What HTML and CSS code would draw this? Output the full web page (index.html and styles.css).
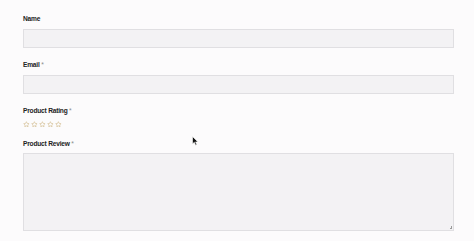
FILE: index.html
```html
<!DOCTYPE html>
<html>
<head>
<meta charset="utf-8">
<link rel="stylesheet" href="styles.css">
</head>
<body>
<form class="form">
  <div class="field">
    <label class="label">Name</label>
    <div class="input"></div>
  </div>
  <div class="field">
    <label class="label">Email <span class="req">*</span></label>
    <div class="input"></div>
  </div>
  <div class="field">
    <label class="label">Product Rating <span class="req">*</span></label>
    <div class="stars">
      <svg class="star" viewBox="0 0 24 24"><path d="M12 2.5l2.9 6.1 6.6.8-4.9 4.6 1.3 6.6L12 17.3l-5.9 3.3 1.3-6.6-4.9-4.6 6.6-.8z"/></svg>
      <svg class="star" viewBox="0 0 24 24"><path d="M12 2.5l2.9 6.1 6.6.8-4.9 4.6 1.3 6.6L12 17.3l-5.9 3.3 1.3-6.6-4.9-4.6 6.6-.8z"/></svg>
      <svg class="star" viewBox="0 0 24 24"><path d="M12 2.5l2.9 6.1 6.6.8-4.9 4.6 1.3 6.6L12 17.3l-5.9 3.3 1.3-6.6-4.9-4.6 6.6-.8z"/></svg>
      <svg class="star" viewBox="0 0 24 24"><path d="M12 2.5l2.9 6.1 6.6.8-4.9 4.6 1.3 6.6L12 17.3l-5.9 3.3 1.3-6.6-4.9-4.6 6.6-.8z"/></svg>
      <svg class="star" viewBox="0 0 24 24"><path d="M12 2.5l2.9 6.1 6.6.8-4.9 4.6 1.3 6.6L12 17.3l-5.9 3.3 1.3-6.6-4.9-4.6 6.6-.8z"/></svg>
    </div>
  </div>
  <div class="field">
    <label class="label label-review">Product Review <span class="req">*</span></label>
    <div class="textarea"></div>
  </div>
</form>
<svg class="cursor" width="7" height="10" viewBox="0 0 7 10"><path d="M0.5 0.5 L0.5 8 L2.3 6.3 L3.6 9.3 L4.8 8.8 L3.6 5.9 L6 5.9 Z" fill="#111" stroke="#fff" stroke-width="0.6"/></svg>
</body>
</html>
```
FILE: styles.css
```css
html, body {
  margin: 0;
  padding: 0;
  background: #fcfbfc;
}
body {
  width: 474px;
  height: 241px;
  overflow: hidden;
  position: relative;
  font-family: "Liberation Sans", Arial, sans-serif;
}
.form {
  display: flex;
  flex-direction: column;
  padding: 14px 20px 0 23px;
}
.field {
  display: flex;
  flex-direction: column;
  margin-bottom: 12px;
}
.label {
  font-size: 6.6px;
  line-height: 9px;
  font-weight: bold;
  letter-spacing: -0.2px;
  color: #222222;
  margin-bottom: 6px;
}
.req {
  color: #8a8a8a;
  font-weight: normal;
}
.input {
  height: 17px;
  background: #f3f2f4;
  border: 1px solid #e0dfe2;
}
.stars {
  display: flex;
  height: 8px;
  margin-top: -1px;
  gap: 1.2px;
  align-items: center;
}
.star {
  width: 6.8px;
  height: 6.8px;
  fill: none;
  stroke: #d2bb8e;
  stroke-width: 2.2;
  stroke-linejoin: round;
}
.field:nth-child(3) { margin-bottom: 11px; }
.label-review { margin-bottom: 5px; }
.textarea {
  height: 76px;
  background: #f3f2f4;
  border: 1px solid #e0dfe2;
  position: relative;
}
.textarea::after {
  content: "";
  position: absolute;
  right: 1px;
  bottom: 1px;
  width: 3px;
  height: 3px;
  background: linear-gradient(135deg, transparent 50%, #9a9a9a 50%);
}
.cursor {
  position: absolute;
  left: 192px;
  top: 136px;
}
```
